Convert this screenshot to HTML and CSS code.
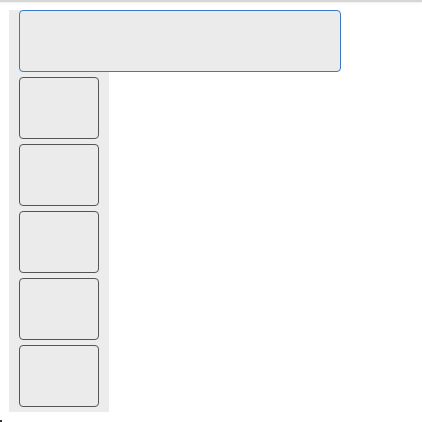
FILE: index.html
```html
<!DOCTYPE html>
<html>
<head>
<meta charset="utf-8">
<link rel="stylesheet" href="styles.css">
</head>
<body>
<div class="topbar"></div>
<div class="page">
  <div class="panel">
    <div class="box box-wide"></div>
    <div class="box"></div>
    <div class="box"></div>
    <div class="box"></div>
    <div class="box"></div>
    <div class="box"></div>
  </div>
  <div class="mark"></div>
</div>
</body>
</html>
```
FILE: styles.css
```css
html, body {
  margin: 0;
  padding: 0;
  background: #ffffff;
  font-family: "Liberation Sans", Arial, sans-serif;
}
.topbar {
  height: 2px;
  background: #d6d6d6;
  box-shadow: 0 1px 2px rgba(0,0,0,0.08);
}
.page {
  padding: 8px 0 0 9px;
}
.panel {
  width: 80px;
  background: #ececec;
  padding: 0 10px 5px 10px;
  display: flex;
  flex-direction: column;
  gap: 5px;
}
.box {
  box-sizing: border-box;
  width: 80px;
  height: 62px;
  background: #ebebeb;
  border: 1px solid #555555;
  border-radius: 4px;
  flex: none;
}
.box-wide {
  width: 322px;
  border-color: #3a78c8;
}
.mark {
  margin: 8px 0 0 -9px;
  width: 2px;
  height: 2px;
  background: #333333;
}
```
